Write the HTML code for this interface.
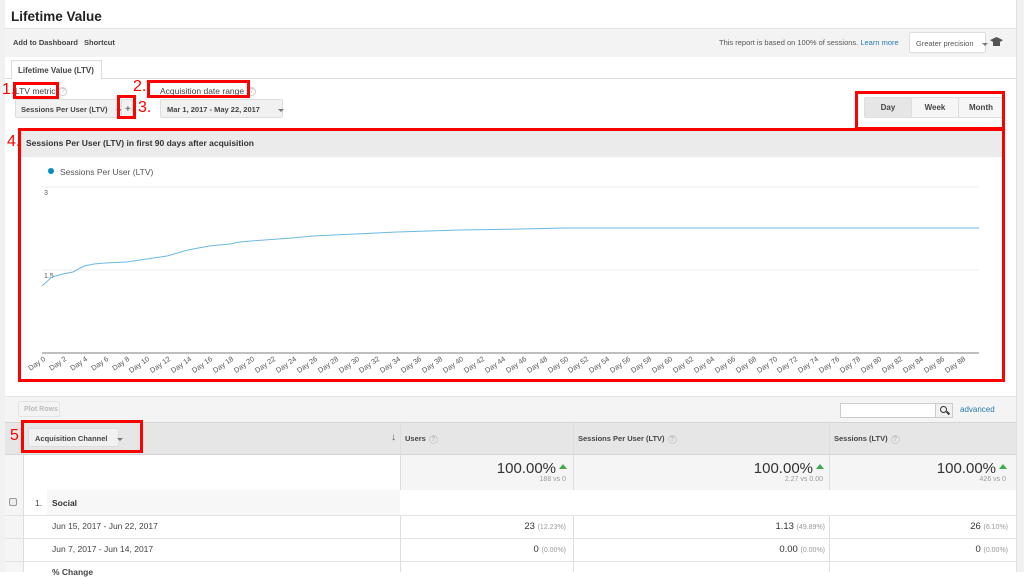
<!DOCTYPE html>
<html><head><meta charset="utf-8"><style>
*{box-sizing:border-box;margin:0;padding:0}
body{width:1024px;height:572px;overflow:hidden;background:#fff;font-family:"Liberation Sans",sans-serif;color:#333;position:relative}
.a{position:absolute;white-space:nowrap}
.rb{position:absolute;border:3px solid #f00}
.rn{position:absolute;color:#f00;font-size:16px}
.btn{position:absolute;white-space:nowrap;background:#f1f1f1;border:1px solid #ddd;border-radius:2px;font-size:8px;font-weight:bold;color:#444}
.q{display:inline-block;width:9px;height:9px;border:1px solid #ccc;border-radius:50%;font-size:7px;color:#bbb;text-align:center;line-height:8px;vertical-align:middle;margin-left:3px}
.car{display:inline-block;border-left:3px solid transparent;border-right:3px solid transparent;border-top:3px solid #777;vertical-align:middle}
.vl{position:absolute;width:1px;background:#ddd}
.hl{position:absolute;height:1px;background:#e3e3e3}
.num{position:absolute;white-space:nowrap;font-size:9.5px;color:#333;text-align:right}
.num small{font-size:7px;color:#999}
.big{position:absolute;white-space:nowrap;font-size:15px;color:#333;text-align:right}
.up{display:inline-block;width:0;height:0;border-left:4px solid transparent;border-right:4px solid transparent;border-bottom:5px solid #3dad47;vertical-align:middle;margin-left:3px;position:relative;top:-3px}
</style></head><body>
<div class="a" style="left:1016px;top:0;width:8px;height:572px;background:#f1f1f1;border-left:1px solid #e0e0e0"></div>
<div class="a" style="left:0;top:0;width:5px;height:572px;background:#f1f1f1"></div>
<div class="a" style="left:11px;top:9px;font-size:13.5px;font-weight:bold;color:#222">Lifetime Value</div>
<div class="a" style="left:5px;top:28px;width:1011px;height:29px;background:#f3f3f3;border-top:1px solid #e3e3e3"></div>
<div class="a" style="left:13px;top:38px;font-size:7.5px;font-weight:bold;color:#444">Add to Dashboard</div>
<div class="a" style="left:84px;top:38px;font-size:7.5px;font-weight:bold;color:#444">Shortcut</div>
<div class="a" style="left:719px;top:38px;font-size:7.5px;color:#555">This report is based on 100% of sessions. <span style="color:#2a7ab0">Learn more</span></div>
<div class="a" style="left:909px;top:32px;width:77px;height:21px;background:#fff;border:1px solid #ddd;border-radius:2px;font-size:7.5px;color:#555;padding:6px 0 0 6px">Greater precision <span class="car" style="margin-left:6px"></span></div>
<div class="a" style="left:990px;top:37px;width:13px;height:7px;background:#555;clip-path:polygon(50% 0,100% 45%,50% 100%,0 45%)"></div>
<div class="a" style="left:993px;top:42px;width:7px;height:4px;background:#555"></div>
<div class="hl" style="left:5px;top:78px;width:1011px;background:#ddd"></div>
<div class="a" style="left:11px;top:60px;width:91px;height:19px;background:#fff;border:1px solid #ddd;border-bottom:none;font-size:8px;font-weight:bold;color:#444;padding:5px 0 0 6px">Lifetime Value (LTV)</div>
<div class="a" style="left:15px;top:86px;font-size:8.5px;color:#444">LTV metric<span class="q">?</span></div>
<div class="btn" style="left:15px;top:99px;width:104px;height:19px;padding:5px 0 0 5px;font-size:7.5px">Sessions Per User (LTV) <span class="car" style="margin-left:6px"></span></div>
<div class="btn" style="left:121px;top:99px;width:12px;height:19px;padding:4px 0 0 3px;font-size:10px;font-weight:normal">+</div>
<div class="a" style="left:160px;top:86px;font-size:8.5px;color:#444">Acquisition date range<span class="q">?</span></div>
<div class="btn" style="left:160px;top:99px;width:123px;height:19px;padding:5px 0 0 6px;font-size:7.5px">Mar 1, 2017 - May 22, 2017 <span class="car" style="margin-left:16px"></span></div>
<div class="btn" style="left:864px;top:97px;width:48px;height:21px;text-align:center;line-height:19px;background:#e6e6e6">Day</div>
<div class="btn" style="left:911px;top:97px;width:48px;height:21px;text-align:center;line-height:19px;background:#f6f6f6">Week</div>
<div class="btn" style="left:958px;top:97px;width:46px;height:21px;text-align:center;line-height:19px;background:#f6f6f6">Month</div>
<div class="a" style="left:18px;top:130px;width:986px;height:27px;background:#ebebeb"></div>
<div class="a" style="left:26px;top:138px;font-size:8.5px;font-weight:bold;color:#333">Sessions Per User (LTV) in first 90 days after acquisition</div>
<div class="a" style="left:48px;top:168px;width:6px;height:6px;border-radius:50%;background:#058dc7"></div>
<div class="a" style="left:60px;top:167px;font-size:8.5px;color:#555">Sessions Per User (LTV)</div>
<svg class="a" style="left:0;top:180px" width="1016" height="200" font-family="Liberation Sans" font-size="7" fill="#555">
<line x1="42" y1="7" x2="979" y2="7" stroke="#eee"/>
<line x1="42" y1="90" x2="979" y2="90" stroke="#eee"/>
<line x1="42" y1="173" x2="979" y2="173" stroke="#999" stroke-width="1.2"/>
<text x="44" y="15">3</text><text x="44" y="98">1.5</text>
<polyline fill="none" stroke="#6cb9e3" stroke-width="1" points="42,106 52,97 63,94 73,92 84,86 94,84 105,83 126,82 147,79 167,76 188,70 209,66 230,64 240,62 251,61 292,58 313,56 355,54 397,52 460,50 522,49 565,48 979,48"/>
<g fill="#555" text-anchor="end" font-size="7.3">
<text transform="translate(46,180) rotate(-35)">Day 0</text><text transform="translate(67,180) rotate(-35)">Day 2</text><text transform="translate(88,180) rotate(-35)">Day 4</text><text transform="translate(109,180) rotate(-35)">Day 6</text><text transform="translate(130,180) rotate(-35)">Day 8</text><text transform="translate(150,180) rotate(-35)">Day 10</text><text transform="translate(171,180) rotate(-35)">Day 12</text><text transform="translate(192,180) rotate(-35)">Day 14</text><text transform="translate(213,180) rotate(-35)">Day 16</text><text transform="translate(234,180) rotate(-35)">Day 18</text><text transform="translate(255,180) rotate(-35)">Day 20</text><text transform="translate(276,180) rotate(-35)">Day 22</text><text transform="translate(297,180) rotate(-35)">Day 24</text><text transform="translate(318,180) rotate(-35)">Day 26</text><text transform="translate(339,180) rotate(-35)">Day 28</text><text transform="translate(360,180) rotate(-35)">Day 30</text><text transform="translate(380,180) rotate(-35)">Day 32</text><text transform="translate(401,180) rotate(-35)">Day 34</text><text transform="translate(422,180) rotate(-35)">Day 36</text><text transform="translate(443,180) rotate(-35)">Day 38</text><text transform="translate(464,180) rotate(-35)">Day 40</text><text transform="translate(485,180) rotate(-35)">Day 42</text><text transform="translate(506,180) rotate(-35)">Day 44</text><text transform="translate(527,180) rotate(-35)">Day 46</text><text transform="translate(548,180) rotate(-35)">Day 48</text><text transform="translate(569,180) rotate(-35)">Day 50</text><text transform="translate(589,180) rotate(-35)">Day 52</text><text transform="translate(610,180) rotate(-35)">Day 54</text><text transform="translate(631,180) rotate(-35)">Day 56</text><text transform="translate(652,180) rotate(-35)">Day 58</text><text transform="translate(673,180) rotate(-35)">Day 60</text><text transform="translate(694,180) rotate(-35)">Day 62</text><text transform="translate(715,180) rotate(-35)">Day 64</text><text transform="translate(736,180) rotate(-35)">Day 66</text><text transform="translate(757,180) rotate(-35)">Day 68</text><text transform="translate(778,180) rotate(-35)">Day 70</text><text transform="translate(798,180) rotate(-35)">Day 72</text><text transform="translate(819,180) rotate(-35)">Day 74</text><text transform="translate(840,180) rotate(-35)">Day 76</text><text transform="translate(861,180) rotate(-35)">Day 78</text><text transform="translate(882,180) rotate(-35)">Day 80</text><text transform="translate(903,180) rotate(-35)">Day 82</text><text transform="translate(924,180) rotate(-35)">Day 84</text><text transform="translate(945,180) rotate(-35)">Day 86</text><text transform="translate(966,180) rotate(-35)">Day 88</text>
</g></svg>
<div class="a" style="left:5px;top:396px;width:1011px;height:27px;background:#f4f4f4;border-top:1px solid #e3e3e3"></div>
<div class="a" style="left:18px;top:401px;width:42px;height:16px;border:1px solid #e3e3e3;border-radius:2px;font-size:7px;color:#bbb;font-weight:bold;padding:4px 0 0 5px">Plot Rows</div>
<div class="a" style="left:840px;top:403px;width:96px;height:15px;background:#fff;border:1px solid #ccc"></div>
<div class="a" style="left:935px;top:403px;width:18px;height:15px;background:#f1f1f1;border:1px solid #ccc"></div>
<div class="a" style="left:940px;top:406px;width:7px;height:7px;border:1.5px solid #333;border-radius:50%"></div>
<div class="a" style="left:946px;top:412px;width:4px;height:2px;background:#333;transform:rotate(45deg)"></div>
<div class="a" style="left:960px;top:405px;font-size:8px;color:#2a7ab0">advanced</div>
<div class="a" style="left:5px;top:422px;width:1011px;height:33px;background:#e6e6e6;border-top:1px solid #d5d5d5;border-bottom:1px solid #d5d5d5"></div>
<div class="a" style="left:5px;top:455px;width:1011px;height:35px;background:#f5f5f5"></div>
<div class="a" style="left:23px;top:455px;width:377px;height:35px;background:#fff"></div>
<div class="a" style="left:5px;top:490px;width:18px;height:82px;background:#f5f5f5"></div>
<div class="a" style="left:23px;top:490px;width:24px;height:25px;background:#fff"></div>
<div class="a" style="left:47px;top:490px;width:353px;height:25px;background:#f7f7f7"></div>
<div class="vl" style="left:23px;top:422px;height:150px"></div>
<div class="vl" style="left:400px;top:422px;height:68px"></div>
<div class="vl" style="left:400px;top:515px;height:57px"></div>
<div class="vl" style="left:573px;top:422px;height:68px"></div>
<div class="vl" style="left:573px;top:515px;height:57px"></div>
<div class="vl" style="left:829px;top:422px;height:68px"></div>
<div class="vl" style="left:829px;top:515px;height:57px"></div>
<div class="hl" style="left:5px;top:515px;width:1011px"></div>
<div class="hl" style="left:5px;top:538px;width:1011px"></div>
<div class="hl" style="left:5px;top:561px;width:1011px"></div>
<div class="btn" style="left:28px;top:428px;width:91px;height:19px;padding:5px 0 0 6px;font-size:7.5px">Acquisition Channel <span class="car" style="margin-left:7px"></span></div>
<div class="a" style="left:391px;top:432px;font-size:10px;color:#555">↓</div>
<div class="a" style="left:405px;top:434px;font-size:7.5px;font-weight:bold;color:#444">Users<span class="q">?</span></div>
<div class="a" style="left:578px;top:434px;font-size:7.5px;font-weight:bold;color:#444">Sessions Per User (LTV)<span class="q">?</span></div>
<div class="a" style="left:834px;top:434px;font-size:7.5px;font-weight:bold;color:#444">Sessions (LTV)<span class="q">?</span></div>
<div class="big" style="right:457px;top:460px">100.00%<span class="up"></span></div>
<div class="big" style="right:200px;top:460px">100.00%<span class="up"></span></div>
<div class="big" style="right:17px;top:460px">100.00%<span class="up"></span></div>
<div class="num" style="right:458px;top:476px;font-size:7px;color:#999">188 vs 0</div>
<div class="num" style="right:201px;top:476px;font-size:7px;color:#999">2.27 vs 0.00</div>
<div class="num" style="right:18px;top:476px;font-size:7px;color:#999">426 vs 0</div>
<div class="a" style="left:9px;top:498px;width:8px;height:8px;border:1px solid #999;border-radius:2px;background:#eee"></div>
<div class="a" style="left:35px;top:498px;font-size:8.5px;color:#444">1.</div>
<div class="a" style="left:52px;top:498px;font-size:8.5px;font-weight:bold;color:#333">Social</div>
<div class="a" style="left:52px;top:521px;font-size:8.5px;color:#444">Jun 15, 2017 - Jun 22, 2017</div>
<div class="a" style="left:52px;top:544px;font-size:8.5px;color:#444">Jun 7, 2017 - Jun 14, 2017</div>
<div class="a" style="left:52px;top:567px;font-size:8.5px;font-weight:bold;color:#444">% Change</div>
<div class="num" style="right:458px;top:521px">23 <small>(12.23%)</small></div>
<div class="num" style="right:199px;top:521px">1.13 <small>(49.89%)</small></div>
<div class="num" style="right:16px;top:521px">26 <small>(6.10%)</small></div>
<div class="num" style="right:458px;top:544px">0 <small>(0.00%)</small></div>
<div class="num" style="right:199px;top:544px">0.00 <small>(0.00%)</small></div>
<div class="num" style="right:16px;top:544px">0 <small>(0.00%)</small></div>
<div class="rb" style="left:13px;top:82px;width:46px;height:17px"></div>
<div class="rn" style="left:2px;top:81px">1.</div>
<div class="rb" style="left:147px;top:80px;width:103px;height:18px"></div>
<div class="rn" style="left:133px;top:78px">2.</div>
<div class="rb" style="left:117px;top:95px;width:19px;height:24px"></div>
<div class="rn" style="left:138px;top:99px">3.</div>
<div class="rb" style="left:855px;top:91px;width:150px;height:39px"></div>
<div class="rb" style="left:18px;top:128px;width:987px;height:254px"></div>
<div class="rn" style="left:7px;top:133px">4.</div>
<div class="rb" style="left:21px;top:420px;width:122px;height:33px"></div>
<div class="rn" style="left:10px;top:427px">5</div>
</body></html>
